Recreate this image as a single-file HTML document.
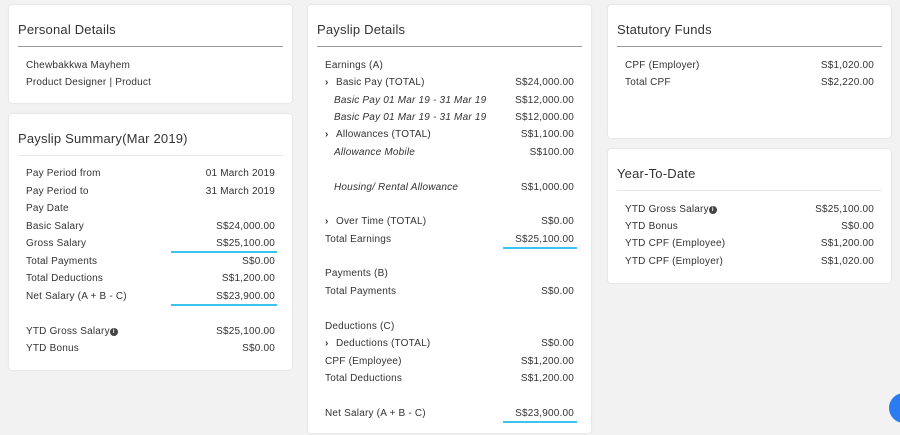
<!DOCTYPE html>
<html><head><style>
body{margin:0;width:900px;height:435px;background:#f2f2f2;position:relative;overflow:hidden;font-family:"Liberation Sans",sans-serif;color:#333}
.c{position:absolute;background:#fff;border-radius:3px;box-shadow:0 0 2px rgba(0,0,0,.12)}
.t{position:absolute;left:9px;font-size:13px;color:#333;letter-spacing:0.2px}
.hl{position:absolute;left:9px;right:9px;height:1px}
.r{position:absolute;left:17px;right:17px;height:12px;font-size:10px;line-height:12px;letter-spacing:0.2px;margin-top:1px}
.r b{font-weight:normal;position:absolute;right:0;top:0}
.r i{font-style:italic}
.u{position:absolute;height:2px;background:#3cc3ef}
.ch{display:inline-block;width:11px;font-size:10px;line-height:12px;font-weight:bold}
.info{display:inline-block;width:8px;height:8px;border-radius:50%;background:#444;color:#fff;font-size:6px;line-height:8px;text-align:center;vertical-align:1px;font-weight:bold}
</style></head><body>

<div class="c" style="left:9px;top:5px;width:283px;height:98px">
<div class="t" style="top:17px">Personal Details</div>
<div class="hl" style="top:41px;background:#999"></div>
<div class="r" style="top:54px">Chewbakkwa Mayhem</div>
<div class="r" style="top:71px">Product Designer | Product</div>
</div>

<div class="c" style="left:9px;top:114px;width:283px;height:256px">
<div class="t" style="top:17px">Payslip Summary(Mar 2019)</div>
<div class="hl" style="top:41px;background:#e6e6e6"></div>
<div class="r" style="top:53px">Pay Period from<b>01 March 2019</b></div>
<div class="r" style="top:71px">Pay Period to<b>31 March 2019</b></div>
<div class="r" style="top:88px">Pay Date</div>
<div class="r" style="top:106px">Basic Salary<b>S$24,000.00</b></div>
<div class="r" style="top:123px">Gross Salary<b>S$25,100.00</b></div>
<div class="u" style="left:162px;width:106px;top:137px"></div>
<div class="r" style="top:141px">Total Payments<b>S$0.00</b></div>
<div class="r" style="top:158px">Total Deductions<b>S$1,200.00</b></div>
<div class="r" style="top:176px">Net Salary (A + B - C)<b>S$23,900.00</b></div>
<div class="u" style="left:162px;width:106px;top:190px"></div>
<div class="r" style="top:211px">YTD Gross Salary<span class="info">i</span><b>S$25,100.00</b></div>
<div class="r" style="top:228px">YTD Bonus<b>S$0.00</b></div>
</div>

<div class="c" style="left:308px;top:5px;width:283px;height:428px">
<div class="t" style="top:17px">Payslip Details</div>
<div class="hl" style="top:41px;background:#999"></div>
<div class="r" style="top:54px">Earnings (A)</div>
<div class="r" style="top:71px"><span class="ch">›</span>Basic Pay (TOTAL)<b>S$24,000.00</b></div>
<div class="r" style="top:89px;left:26px"><i>Basic Pay 01 Mar 19 - 31 Mar 19</i><b>S$12,000.00</b></div>
<div class="r" style="top:106px;left:26px"><i>Basic Pay 01 Mar 19 - 31 Mar 19</i><b>S$12,000.00</b></div>
<div class="r" style="top:123px"><span class="ch">›</span>Allowances (TOTAL)<b>S$1,100.00</b></div>
<div class="r" style="top:141px;left:26px"><i>Allowance Mobile</i><b>S$100.00</b></div>
<div class="r" style="top:176px;left:26px"><i>Housing/ Rental Allowance</i><b>S$1,000.00</b></div>
<div class="r" style="top:210px"><span class="ch">›</span>Over Time (TOTAL)<b>S$0.00</b></div>
<div class="r" style="top:228px">Total Earnings<b>S$25,100.00</b></div>
<div class="u" style="left:195px;width:74px;top:242px"></div>
<div class="r" style="top:262px">Payments (B)</div>
<div class="r" style="top:280px">Total Payments<b>S$0.00</b></div>
<div class="r" style="top:315px">Deductions (C)</div>
<div class="r" style="top:332px"><span class="ch">›</span>Deductions (TOTAL)<b>S$0.00</b></div>
<div class="r" style="top:350px">CPF (Employee)<b>S$1,200.00</b></div>
<div class="r" style="top:367px">Total Deductions<b>S$1,200.00</b></div>
<div class="r" style="top:402px">Net Salary (A + B - C)<b>S$23,900.00</b></div>
<div class="u" style="left:195px;width:74px;top:416px"></div>
</div>

<div class="c" style="left:608px;top:5px;width:283px;height:133px">
<div class="t" style="top:17px">Statutory Funds</div>
<div class="hl" style="top:41px;background:#999"></div>
<div class="r" style="top:54px">CPF (Employer)<b>S$1,020.00</b></div>
<div class="r" style="top:71px">Total CPF<b>S$2,220.00</b></div>
</div>

<div class="c" style="left:608px;top:149px;width:283px;height:134px">
<div class="t" style="top:17px">Year-To-Date</div>
<div class="hl" style="top:41px;background:#e6e6e6"></div>
<div class="r" style="top:54px">YTD Gross Salary<span class="info">i</span><b>S$25,100.00</b></div>
<div class="r" style="top:71px">YTD Bonus<b>S$0.00</b></div>
<div class="r" style="top:88px">YTD CPF (Employee)<b>S$1,200.00</b></div>
<div class="r" style="top:106px">YTD CPF (Employer)<b>S$1,020.00</b></div>
</div>

<div style="position:absolute;left:889px;top:393px;width:30px;height:30px;border-radius:50%;background:#2a7cf0"></div>
</body></html>
